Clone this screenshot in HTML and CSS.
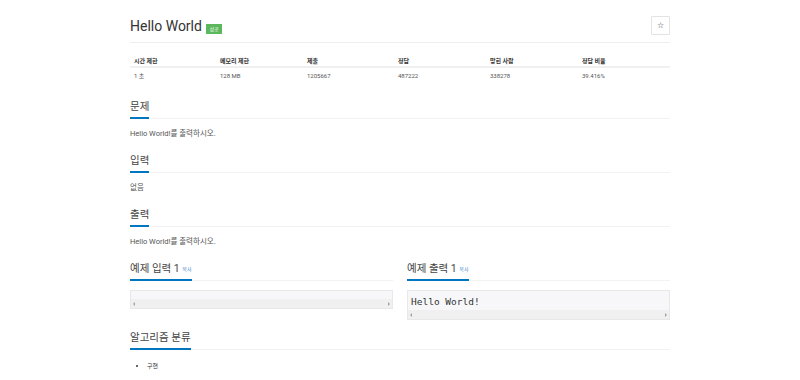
FILE: index.html
```html
<!DOCTYPE html>
<html>
<head>
    <meta charset="UTF-8">
    <title>Hello World</title>
    <!-- Styling for the problem page -->
    <link rel="stylesheet" href="styles.css">
</head>
<body>
<div class="container">
    <div class="page-header">
        <h1 class="problem-title">Hello World <span class="result-badge">성공</span></h1>
        <button class="star-button" type="button">☆</button>
    </div>

    <!-- Problem info table -->
    <table class="problem-info">
        <thead>
            <tr>
                <th>시간 제한</th>
                <th>메모리 제한</th>
                <th>제출</th>
                <th>정답</th>
                <th>맞힌 사람</th>
                <th>정답 비율</th>
            </tr>
        </thead>
        <tbody>
            <tr>
                <td>1 초</td>
                <td>128 MB</td>
                <td>1205667</td>
                <td>487222</td>
                <td>338278</td>
                <td>39.416%</td>
            </tr>
        </tbody>
    </table>

    <section class="problem-section">
        <div class="headline"><h2>문제</h2></div>
        <p class="problem-text">Hello World!를 출력하시오.</p>
    </section>

    <section class="problem-section">
        <div class="headline"><h2>입력</h2></div>
        <p class="problem-text">없음</p>
    </section>

    <section class="problem-section">
        <div class="headline"><h2>출력</h2></div>
        <p class="problem-text">Hello World!를 출력하시오.</p>
    </section>

    <!-- Samples -->
    <div class="sample-row">
        <section class="sample-section">
            <div class="headline"><h2>예제 입력 1 <a class="copy-button">복사</a></h2></div>
            <div class="sample-box">
                <pre class="sample-data"></pre>
                <div class="fake-scrollbar"><span class="arrow-left"></span><span class="arrow-right"></span></div>
            </div>
        </section>
        <section class="sample-section">
            <div class="headline"><h2>예제 출력 1 <a class="copy-button">복사</a></h2></div>
            <div class="sample-box">
                <pre class="sample-data">Hello World!</pre>
                <div class="fake-scrollbar"><span class="arrow-left"></span><span class="arrow-right"></span></div>
            </div>
        </section>
    </div>

    <section class="problem-section">
        <div class="headline"><h2>알고리즘 분류</h2></div>
        <ul class="tag-list">
            <li>구현</li>
        </ul>
    </section>
</div>
</body>
</html>
```

FILE: styles.css
```css
/* Body styling */
body {
    font-family: Roboto, "Noto Sans CJK KR", sans-serif;
    background-color: #fff;
    color: #555;
    margin: 0;
    padding: 0;
}

/* Page container */
.container {
    width: 540px;
    margin: 0 auto;
}

/* Title row */
.page-header {
    display: flex;
    align-items: center;
    justify-content: space-between;
    padding-top: 16px;
    padding-bottom: 7px;
    border-bottom: 1px solid #eee;
}

.problem-title {
    margin: 0;
    font-weight: 400;
    font-size: 14px;
    line-height: 18px;
    color: #333;
}

.result-badge {
    display: inline-block;
    margin-left: 1px;
    padding: 0 3px;
    line-height: 10px;
    font-size: 5px;
    color: #fff;
    background-color: #5cb85c;
}

.star-button {
    width: 19px;
    height: 19px;
    padding: 0;
    border: 1px solid #e3e3e3;
    border-radius: 1px;
    background-color: #fff;
    color: #333;
    font-size: 8px;
    line-height: 17px;
}

/* Info table */
.problem-info {
    width: 100%;
    margin-top: 12px;
    border-collapse: collapse;
    font-size: 6px;
}

.problem-info th {
    padding: 2px 4px 1px;
    line-height: 8px;
    text-align: left;
    font-weight: 700;
    color: #333;
    border-bottom: 2px solid #f0f0f0;
}

.problem-info td {
    padding: 4px 4px 2px;
    line-height: 8px;
}

.problem-info th:nth-child(1) { width: 78px; }
.problem-info th:nth-child(2) { width: 79px; }
.problem-info th:nth-child(3) { width: 83px; }
.problem-info th:nth-child(4) { width: 84px; }
.problem-info th:nth-child(5) { width: 84px; }

/* Sections */
.problem-section {
    margin-bottom: 14px;
}

.problem-info + .problem-section {
    margin-top: 17px;
}

.headline {
    display: flex;
    border-bottom: 1px solid #f2f2f2;
}

.headline h2 {
    margin: 0 0 -1px;
    padding-bottom: 2px;
    font-size: 10.5px;
    line-height: 16px;
    font-weight: 400;
    color: #444;
    border-bottom: 2px solid #0076c0;
}

.problem-text {
    margin: 10px 0 0;
    font-size: 7.5px;
    line-height: 10px;
}

/* Samples */
.sample-row {
    display: grid;
    grid-template-columns: 1fr 1fr;
    gap: 14px;
    margin-bottom: 10px;
}

.copy-button {
    font-size: 5px;
    color: #428bca;
    vertical-align: 1px;
}

.sample-box {
    margin-top: 9px;
    border: 1px solid #e8e8e8;
    background-color: #f7f7f9;
}

.sample-data {
    margin: 0;
    padding: 5px 3px 3px;
    font-family: "DejaVu Sans Mono", monospace;
    font-size: 9.5px;
    line-height: 11px;
    color: #333;
}

.fake-scrollbar {
    display: flex;
    align-items: center;
    justify-content: space-between;
    height: 9px;
    padding: 0 2px;
    background-color: #f0f0f0;
}

.arrow-left,
.arrow-right {
    width: 0;
    height: 0;
    border-top: 2px solid transparent;
    border-bottom: 2px solid transparent;
}

.arrow-left {
    border-right: 2px solid #a3a3a3;
}

.arrow-right {
    border-left: 2px solid #a3a3a3;
}

/* Tag list */
.tag-list {
    margin: 11px 0 0;
    padding-left: 17px;
    font-size: 6px;
    line-height: 10px;
    color: #333;
}
```
